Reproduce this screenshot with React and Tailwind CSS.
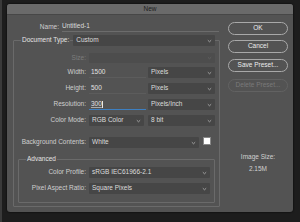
import React from "react";

function Chevron() {
  return (
    <svg width="5" height="4" viewBox="0 0 5 4" className="shrink-0">
      <path d="M0.8 1.2 L2.5 2.8 L4.2 1.2" fill="none" stroke="#b8b8b8" strokeWidth="0.8" />
    </svg>
  );
}

function Select({ value, className = "" }) {
  return (
    <div className={`h-[11px] bg-[#464646] rounded-[1px] flex items-center justify-between pl-[3px] pr-[3px] text-[#dcdcdc] ${className}`}>
      <span>{value}</span>
      <Chevron />
    </div>
  );
}

function Label({ children, w, dim }) {
  return (
    <div className={`shrink-0 text-right ${w} ${dim ? "text-[#7c7c7c]" : "text-[#cfcfcf]"}`}>{children}</div>
  );
}

function Btn({ children, disabled }) {
  return (
    <div
      className={`w-[60px] h-[13px] rounded-full border flex items-center justify-center ${
        disabled ? "border-[#626262] text-[#7a7a7a]" : "border-[#a9a9a9] text-[#ececec]"
      }`}
    >
      {children}
    </div>
  );
}

export default function App() {
  return (
    <div
      className="w-[300px] h-[222px] bg-[#1d1d1d] flex overflow-hidden text-[6.5px] leading-none"
      style={{ fontFamily: '"Liberation Sans", Arial, sans-serif' }}
    >
      <div className="w-[2px] h-full bg-[#3a3a3a]" />
      <div className="ml-[5px] mt-[4px] w-[286px] h-[208px] bg-[#535353] rounded-[3px] overflow-hidden flex flex-col shadow-[0_0_2px_#000]">
        {/* title bar */}
        <div className="h-[11px] bg-[#6a6a6a] border-b border-[#474747] flex items-center justify-center text-[#1e1e1e]">
          New
        </div>

        <div className="flex flex-1">
          {/* left side */}
          <div className="w-[213px] flex flex-col">
            <div className="mt-[7px] h-[10px] flex items-center">
              <Label w="w-[52px]">Name:</Label>
              <div className="ml-[3px] mr-[1px] flex-1 h-full flex items-center border-b border-[#6c6c6c] text-[#dcdcdc]">
                Untitled-1
              </div>
            </div>

            <div className="mt-[8px] ml-[6px] w-[207px] h-[167px] border border-[#6a6a6a] rounded-[1px] flex flex-col">
              <div className="-mt-[6px] h-[11px] flex items-center pl-[7px] pr-[4px]">
                <div className="bg-[#535353] px-[1px] h-full flex items-center text-[#e4e4e4]">Document Type:</div>
                <Select value="Custom" className="ml-[3px] flex-1" />
              </div>

              <div className="mt-[7px] h-[10px] flex items-center pr-[4px]">
                <Label w="w-[72px]" dim>Size:</Label>
                <div className="ml-[3px] flex-1 h-full bg-[#4d4d4d] rounded-[1px] flex justify-end items-center pr-[3px]">
                  <svg width="5" height="4" viewBox="0 0 5 4">
                    <path d="M0.8 1.2 L2.5 2.8 L4.2 1.2" fill="none" stroke="#666" strokeWidth="0.8" />
                  </svg>
                </div>
              </div>

              <div className="mt-[4px] h-[11px] flex items-center pr-[4px]">
                <Label w="w-[72px]">Width:</Label>
                <div className="ml-[3px] w-[57px] h-full flex items-center pl-[2px] border-b border-[#5c5c5c] text-[#e2e2e2]">1500</div>
                <Select value="Pixels" className="ml-[2px] flex-1" />
              </div>

              <div className="mt-[5px] h-[11px] flex items-center pr-[4px]">
                <Label w="w-[72px]">Height:</Label>
                <div className="ml-[3px] w-[57px] h-full flex items-center pl-[2px] border-b border-[#5c5c5c] text-[#e2e2e2]">500</div>
                <Select value="Pixels" className="ml-[2px] flex-1" />
              </div>

              <div className="mt-[5px] h-[11px] flex items-center pr-[4px]">
                <Label w="w-[72px]">Resolution:</Label>
                <div className="ml-[3px] w-[57px] h-full flex items-center pl-[2px] border-b border-[#3d7fc1] text-[#e2e2e2]">
                  <span className="underline decoration-[#aaa]">300</span>
                  <span className="w-[1px] h-[7px] bg-[#e8e8e8]" />
                </div>
                <Select value="Pixels/Inch" className="ml-[2px] flex-1" />
              </div>

              <div className="mt-[5px] h-[11px] flex items-center pr-[4px]">
                <Label w="w-[72px]">Color Mode:</Label>
                <Select value="RGB Color" className="ml-[3px] w-[55px]" />
                <Select value="8 bit" className="ml-[4px] flex-1" />
              </div>

              <div className="mt-[11px] h-[11px] flex items-center">
                <Label w="w-[72px]">Background Contents:</Label>
                <Select value="White" className="ml-[3px] w-[110px]" />
                <div className="ml-[4px] w-[8px] h-[8px] bg-white border border-[#888] self-start" />
              </div>

              <div className="mt-[11px] ml-[4px] w-[197px] h-[44px] border border-[#6a6a6a] rounded-[1px] flex flex-col">
                <div className="-mt-[4px] ml-[7px] self-start bg-[#535353] px-[1px] text-[#e4e4e4]">Advanced</div>
                <div className="mt-[5px] h-[10px] flex items-center">
                  <Label w="w-[67px]">Color Profile:</Label>
                  <Select value="sRGB IEC61966-2.1" className="ml-[3px] w-[121px] h-[10px]" />
                </div>
                <div className="mt-[6px] h-[10px] flex items-center">
                  <Label w="w-[67px]">Pixel Aspect Ratio:</Label>
                  <Select value="Square Pixels" className="ml-[3px] w-[121px] h-[10px]" />
                </div>
              </div>
            </div>
          </div>

          {/* right side */}
          <div className="flex-1 flex flex-col items-start pl-[8px]">
            <div className="mt-[7px]"><Btn>OK</Btn></div>
            <div className="mt-[5px]"><Btn>Cancel</Btn></div>
            <div className="mt-[6px]"><Btn>Save Preset...</Btn></div>
            <div className="mt-[7px]"><Btn disabled>Delete Preset...</Btn></div>
            <div className="mt-[62px] w-[60px] text-center text-[#d0d0d0]">Image Size:</div>
            <div className="mt-[5px] w-[60px] text-center text-[#d0d0d0]">2.15M</div>
          </div>
        </div>
      </div>
    </div>
  );
}
